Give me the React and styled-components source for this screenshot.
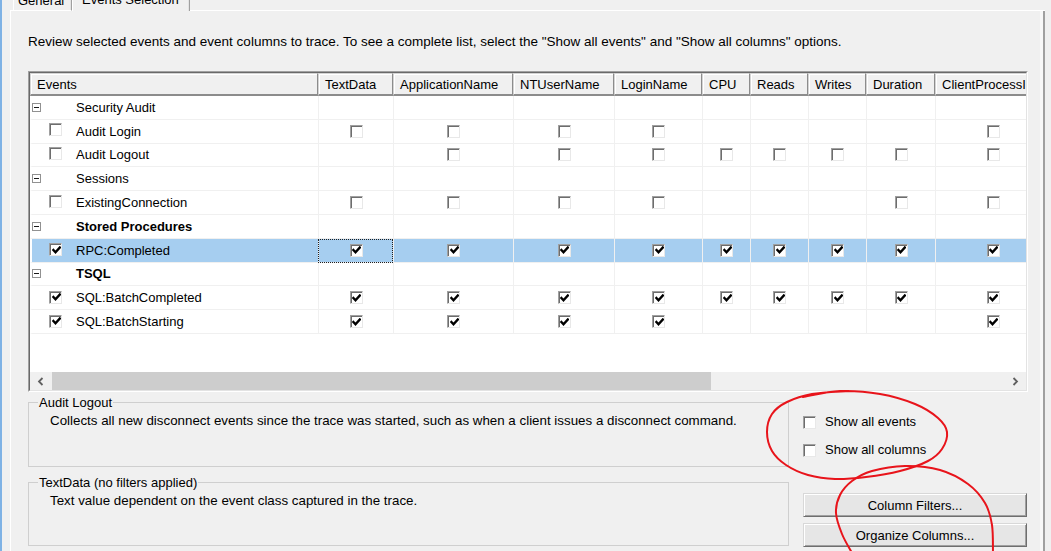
import React from 'react';
import styled, { createGlobalStyle, css } from 'styled-components';

const GlobalStyle = createGlobalStyle`
  html, body { margin: 0; padding: 0; background: #f0f0f0; }
  body { font-family: "Liberation Sans", Arial, sans-serif; font-size: 13px; color: #000; }
  * { box-sizing: border-box; }
`;

const COLS = '288px 75px 120px 101px 88px 48px 58px 58px 69px 115px';

const Screen = styled.div`
  position: relative;
  width: 1051px;
  height: 551px;
  overflow: hidden;
`;

const Window = styled.div`
  width: 100%;
  height: 100%;
  background: #f0f0f0;
  border-left: 2px solid #7fb2e5;
  padding: 0 6px 0 8px;
  display: flex;
  flex-direction: column;
`;

const TabStrip = styled.div`
  height: 11px;
  flex-shrink: 0;
  display: flex;
  align-items: flex-end;
  overflow: hidden;
`;

const StripEdge = styled.div`
  height: 100%;
  width: ${p => p.$width || 'auto'};
  flex: ${p => (p.$grow ? 1 : 'none')};
  border-bottom: 1px solid #fff;
`;

const Tab = styled.div`
  flex: none;
  width: ${p => p.$width}px;
  height: ${p => (p.$active ? 24 : 20)}px;
  padding-left: ${p => (p.$active ? 9 : 4)}px;
  display: flex;
  align-items: center;
  white-space: nowrap;
  background: #f0f0f0;
  border-left: 1px solid #fff;
  border-right: 1px solid #a0a0a0;
  box-shadow: inset -1px 0 0 #e3e3e3;
  border-bottom: ${p => (p.$active ? 'none' : '1px solid #fff')};
  line-height: 15px;
`;

const TabPage = styled.div`
  flex: 1;
  min-height: 0;
  border-left: 1px solid #fff;
  border-right: 2px solid #a0a0a0;
  box-shadow: inset -3px 0 0 #f8f8f8;
  padding: 23px 0 0 17px;
`;

const Intro = styled.div`
  font-size: 13.5px;
  line-height: 16px;
  white-space: nowrap;
`;

const GridFrame = styled.div`
  margin-top: 21px;
  width: 1000px;
  height: 321px;
  border: 1px solid;
  border-color: #a0a0a0 #ffffff #ffffff #a0a0a0;
`;

const GridInner = styled.div`
  height: 100%;
  display: flex;
  flex-direction: column;
  overflow: hidden;
  background: #fff;
  border: 1px solid;
  border-color: #696969 #e3e3e3 #e3e3e3 #696969;
`;

const HeaderRow = styled.div`
  flex: none;
  height: 23px;
  display: grid;
  grid-template-columns: ${COLS};
  background: #f0f0f0;
`;

const HeaderCell = styled.div`
  display: flex;
  align-items: center;
  padding-left: 6px;
  white-space: nowrap;
  overflow: hidden;
  background: #f0f0f0;
  border-style: solid;
  border-width: 1px 1px 2px 1px;
  border-color: #d4d4d4 #8c8c8c #8c8c8c #d4d4d4;
  box-shadow: inset 1px 1px 0 #fff;
`;

const Body = styled.div`
  flex: 1;
  min-height: 0;
  overflow: hidden;
  background: #fff;
`;

const Row = styled.div`
  display: grid;
  grid-template-columns: ${COLS};
  height: 23.8px;
  background: ${p => (p.$selected ? '#a6cef0' : '#fff')};
`;

const EventCell = styled.div`
  display: grid;
  grid-template-columns: 17px 27px 1fr;
  align-items: center;
  border-left: 2px solid #fff;
  border-bottom: 1px solid #f0f0f0;
  white-space: nowrap;
  font-weight: ${p => (p.$bold ? 700 : 400)};
`;

const Cell = styled.div`
  display: flex;
  align-items: center;
  justify-content: center;
  border-left: 1px solid #f0f0f0;
  border-bottom: 1px solid #f0f0f0;
  ${p =>
    p.$focus &&
    css`
      outline: 1px dotted #202020;
      outline-offset: -1px;
    `}
`;

const Expander = styled.span`
  width: 9px;
  height: 9px;
  border: 1px solid #919191;
  background: #fff;
  display: flex;
  align-items: center;
  justify-content: center;
  &::after {
    content: '';
    width: 5px;
    height: 1px;
    background: #1a1a1a;
  }
`;

const Box = styled.span`
  width: 13px;
  height: 13px;
  flex: none;
  display: inline-flex;
  align-items: center;
  justify-content: center;
  background: #fff;
  border: 1px solid;
  border-color: #a0a0a0 #e8e8e8 #e8e8e8 #a0a0a0;
  box-shadow: inset 1px 1px 0 #6d6d6d;
  padding: 1px 0 0 1px;
`;

const ScrollBar = styled.div`
  flex: none;
  height: 18px;
  display: flex;
  background: #f0f0f0;
`;

const ArrowButton = styled.div`
  width: 22px;
  flex: none;
  display: flex;
  align-items: center;
  justify-content: center;
`;

const Track = styled.div`
  flex: 1;
  display: flex;
`;

const Thumb = styled.div`
  width: ${p => p.$width}px;
  background: #cdcdcd;
`;

const Bottom = styled.div`
  margin-top: 3px;
  display: grid;
  grid-template-columns: 761px 224px;
  column-gap: 14px;
  row-gap: 8px;
`;

const GroupBox = styled.fieldset`
  margin: 0;
  min-width: 0;
  height: ${p => p.$height}px;
  padding: 0 0 0 9px;
  border: 1px solid #cfcfcf;
`;

const Legend = styled.legend`
  padding: 0 1px;
  line-height: 15px;
`;

const GroupText = styled.div`
  margin: 4px 0 0 12px;
  font-size: 13.35px;
  line-height: 14px;
  white-space: nowrap;
`;

const Options = styled.div`
  display: flex;
  flex-direction: column;
  gap: 14px;
  padding-top: 20px;
`;

const Option = styled.label`
  display: flex;
  align-items: center;
  gap: 9px;
  height: 14px;
  line-height: 14px;
  white-space: nowrap;
`;

const Buttons = styled.div`
  display: flex;
  flex-direction: column;
  gap: 6px;
  padding-top: 18px;
`;

const Button = styled.button`
  width: 224px;
  height: 24px;
  margin: 0;
  padding: 0;
  font: inherit;
  color: #000;
  background: #e6e6e6;
  border: 1px solid;
  border-color: #d8d8d8 #6e6e6e #6e6e6e #d8d8d8;
  box-shadow: inset 1px 1px 0 #fff, inset -1px -1px 0 #a0a0a0;
`;

const Overlay = styled.svg`
  position: absolute;
  left: 0;
  top: 0;
  width: 1051px;
  height: 551px;
  pointer-events: none;
`;

const CheckBox = ({ checked }) => (
  <Box>
    {checked && (
      <svg width="9" height="9" viewBox="0 0 9 9">
        <polyline points="1.4,4 3.5,6.3 7.8,1.5" fill="none" stroke="#000" strokeWidth="2.4" strokeLinecap="square" />
      </svg>
    )}
  </Box>
);

const Chevron = ({ dir }) => (
  <svg width="8" height="9" viewBox="0 0 8 9">
    <polyline
      points={dir === 'left' ? '5.5,1 2,4.5 5.5,8' : '2.5,1 6,4.5 2.5,8'}
      fill="none"
      stroke="#606060"
      strokeWidth="1.8"
    />
  </svg>
);

const columns = ['TextData', 'ApplicationName', 'NTUserName', 'LoginName', 'CPU', 'Reads', 'Writes', 'Duration', 'ClientProcessID'];

const rows = [
  { group: 'Security Audit' },
  { name: 'Audit Login', checked: false, cells: 'uuuu----u' },
  { name: 'Audit Logout', checked: false, cells: '-uuuuuuuu' },
  { group: 'Sessions' },
  { name: 'ExistingConnection', checked: false, cells: 'uuuu---uu' },
  { group: 'Stored Procedures', bold: true },
  { name: 'RPC:Completed', checked: true, cells: 'ccccccccc', selected: true },
  { group: 'TSQL', bold: true },
  { name: 'SQL:BatchCompleted', checked: true, cells: 'ccccccccc' },
  { name: 'SQL:BatchStarting', checked: true, cells: 'cccc----c' },
];

function smoothPath(pts) {
  const n = pts.length;
  const get = i => pts[Math.max(0, Math.min(n - 1, i))];
  let d = `M${pts[0][0]},${pts[0][1]}`;
  for (let i = 0; i < n - 1; i++) {
    const p0 = get(i - 1), p1 = get(i), p2 = get(i + 1), p3 = get(i + 2);
    const c1 = [p1[0] + (p2[0] - p0[0]) / 6, p1[1] + (p2[1] - p0[1]) / 6];
    const c2 = [p2[0] - (p3[0] - p1[0]) / 6, p2[1] - (p3[1] - p1[1]) / 6];
    d += ` C${c1[0].toFixed(1)},${c1[1].toFixed(1)} ${c2[0].toFixed(1)},${c2[1].toFixed(1)} ${p2[0]},${p2[1]}`;
  }
  return d;
}

const loopOne = [
  [803, 397], [840, 391], [880, 394], [915, 404], [938, 418], [947, 432], [942, 449], [928, 461],
  [900, 471], [866, 477], [835, 479], [808, 475], [786, 465], [772, 451], [767, 432], [772, 414],
  [787, 402], [812, 394], [848, 391],
];

const loopTwo = [
  [852, 553], [842, 534], [836, 513], [840, 495], [852, 481], [872, 471], [905, 466], [940, 470],
  [968, 484], [985, 503], [992, 525], [993, 553],
];

export default function App() {
  return (
    <Screen>
      <GlobalStyle />
      <Window>
        <TabStrip>
          <StripEdge $width="3px" />
          <Tab $width={59}>General</Tab>
          <Tab $width={118} $active>Events Selection</Tab>
          <StripEdge $grow />
        </TabStrip>
        <TabPage>
          <Intro>
            Review selected events and event columns to trace. To see a complete list, select the "Show all events" and "Show all columns" options.
          </Intro>
          <GridFrame>
            <GridInner>
              <HeaderRow>
                <HeaderCell>Events</HeaderCell>
                {columns.map(c => (
                  <HeaderCell key={c}>{c}</HeaderCell>
                ))}
              </HeaderRow>
              <Body>
                {rows.map((r, i) => (
                  <Row key={i} $selected={r.selected}>
                    <EventCell $bold={r.bold}>
                      <span>{r.group && <Expander />}</span>
                      <span>{r.name && <CheckBox checked={r.checked} />}</span>
                      <span>{r.group || r.name}</span>
                    </EventCell>
                    {columns.map((c, j) => {
                      const v = r.cells ? r.cells[j] : '-';
                      return (
                        <Cell key={c} $focus={r.selected && j === 0}>
                          {v !== '-' && <CheckBox checked={v === 'c'} />}
                        </Cell>
                      );
                    })}
                  </Row>
                ))}
              </Body>
              <ScrollBar>
                <ArrowButton>
                  <Chevron dir="left" />
                </ArrowButton>
                <Track>
                  <Thumb $width={659} />
                </Track>
                <ArrowButton>
                  <Chevron dir="right" />
                </ArrowButton>
              </ScrollBar>
            </GridInner>
          </GridFrame>
          <Bottom>
            <GroupBox $height={72}>
              <Legend>Audit Logout</Legend>
              <GroupText>
                Collects all new disconnect events since the trace was started, such as when a client issues a disconnect command.
              </GroupText>
            </GroupBox>
            <Options>
              <Option>
                <CheckBox />
                Show all events
              </Option>
              <Option>
                <CheckBox />
                Show all columns
              </Option>
            </Options>
            <GroupBox $height={71}>
              <Legend>TextData (no filters applied)</Legend>
              <GroupText>Text value dependent on the event class captured in the trace.</GroupText>
            </GroupBox>
            <Buttons>
              <Button>Column Filters...</Button>
              <Button>Organize Columns...</Button>
            </Buttons>
          </Bottom>
        </TabPage>
      </Window>
      <Overlay viewBox="0 0 1051 551">
        <path d={smoothPath(loopOne)} fill="none" stroke="#e8141b" strokeWidth="2" strokeLinecap="round" />
        <path d={smoothPath(loopTwo)} fill="none" stroke="#e8141b" strokeWidth="2" strokeLinecap="round" />
      </Overlay>
    </Screen>
  );
}
